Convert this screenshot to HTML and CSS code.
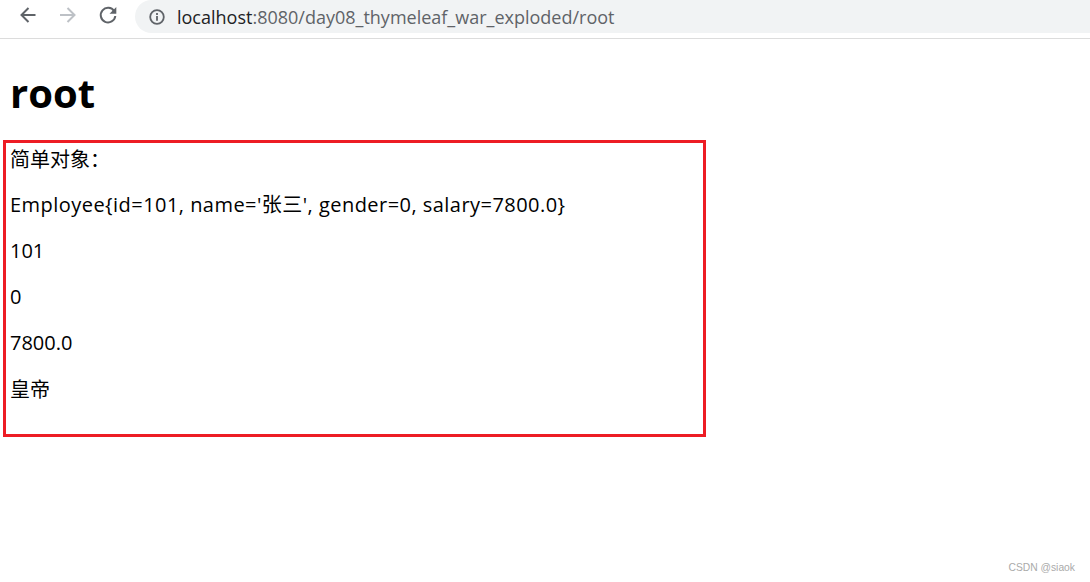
FILE: index.html
```html
<!DOCTYPE html>
<html lang="zh">
<head>
<meta charset="utf-8">
<title>root</title>
<link rel="stylesheet" href="styles.css">
</head>
<body>
<header class="toolbar">
  <svg class="nav-icon" viewBox="0 0 20 20" width="20" height="20"><path class="stroke-dark" d="M17.500 10H3.500M10.500 3 3.500 10l7 7"/></svg>
  <svg class="nav-icon" viewBox="0 0 20 20" width="20" height="20"><path class="stroke-light" d="M2 10h14.500M9.500 3l7 7-7 7"/></svg>
  <svg class="nav-icon" viewBox="0 0 20 20" width="20" height="20"><path class="stroke-dark" d="M16.200 6.200A7.300 7.300 0 1 0 17.300 11"/><path class="fill-dark" d="M18.300 2v6.800h-6.800z"/></svg>
  <div class="omnibox">
    <svg class="info-icon" viewBox="0 0 16 16" width="16" height="16"><circle class="stroke-info" cx="8" cy="8" r="6.800"/><path class="fill-dark" d="M7.100 7h1.800v4.700H7.100zM7.100 4.100h1.800v1.800H7.100z"/></svg>
    <span class="url"><span class="host">localhost</span>:8080/day08_thymeleaf_war_exploded/root</span>
  </div>
</header>
<main class="page">
  <h1 class="title">root</h1>
  <section class="frame">
    <p class="cjk">简单对象：</p>
    <p class="mixed">Employee{id=101, name='张三', gender=0, salary=7800.0}</p>
    <p>101</p>
    <p>0</p>
    <p>7800.0</p>
    <p class="cjk">皇帝</p>
  </section>
</main>
<div class="watermark">CSDN @siaok</div>
</body>
</html>
```
FILE: styles.css
```css
html, body {
  margin: 0;
  padding: 0;
  background: #fff;
}
body {
  position: relative;
  width: 1090px;
  height: 582px;
  overflow: hidden;
  font-family: "Open Sans", "Noto Sans CJK SC", sans-serif;
  color: #000;
}
.toolbar {
  display: flex;
  align-items: center;
  height: 38px;
  padding-left: 18px;
  border-bottom: 1px solid #dcdcdc;
}
.nav-icon {
  margin-right: 20px;
  flex: none;
  margin-top: -8px;
}
.nav-icon path { fill: none; stroke-width: 2; }
.nav-icon .stroke-dark { stroke: #5f6368; }
.nav-icon .stroke-light { stroke: #bdc1c6; }
.nav-icon .fill-dark { fill: #5f6368; stroke: none; }
.omnibox {
  display: flex;
  align-items: center;
  height: 33px;
  margin-top: -5px;
  margin-left: -3px;
  flex: 1;
  padding-left: 14px;
  background: #f1f3f4;
  border-radius: 17px 0 0 17px;
}
.info-icon { flex: none; margin-right: 12px; }
.stroke-info { fill: none; stroke: #5f6368; stroke-width: 1.800; }
.fill-dark { fill: #5f6368; }
.url {
  font-size: 18px;
  color: #5f6368;
  white-space: nowrap;
}
.host { color: #202124; }
.page {
  padding: 0 0 0 3px;
}
.title {
  margin: 27px 0 20px 7px;
  font-size: 40px;
  line-height: 54px;
  font-weight: 700;
}
.frame {
  width: 697px;
  height: 288px;
  border: 3px solid #ed1c24;
  padding-top: 3px;
}
.frame p {
  margin: 0 0 20px 4px;
  font-size: 20px;
  line-height: 26px;
}
.frame .cjk {
  padding-top: 1px;
  margin-bottom: 19px;
}
.frame .mixed {
  letter-spacing: 0.46px;
}
.watermark {
  position: absolute;
  right: 15px;
  bottom: 8px;
  font-family: "Liberation Sans", sans-serif;
  font-size: 10.300px;
  line-height: 12px;
  color: #aaa;
}
```
